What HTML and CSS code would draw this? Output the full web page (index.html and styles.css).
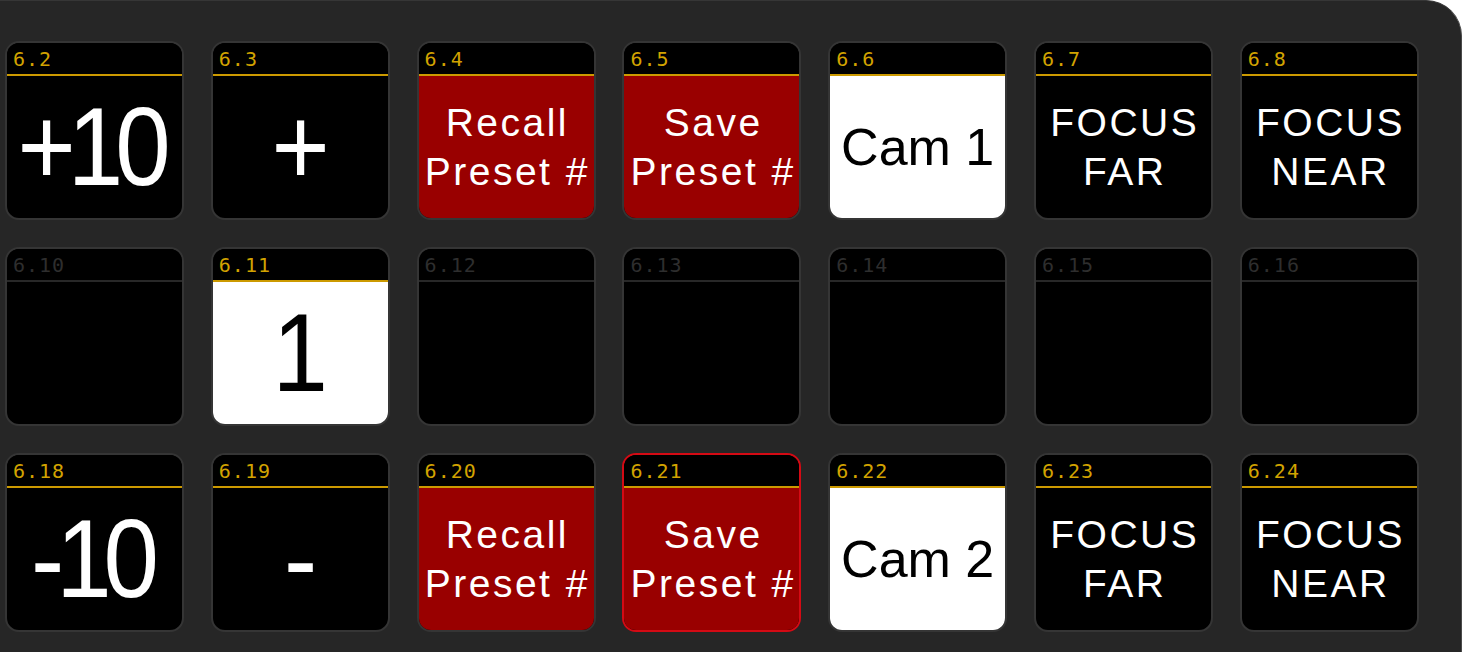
FILE: index.html
```html
<!DOCTYPE html>
<html lang="en">
<head>
    <meta charset="UTF-8">
    <meta name="viewport" content="width=device-width, initial-scale=1.0">
    <title>Macro Page 6</title>
    <link rel="stylesheet" href="styles.css">
</head>
<body>
    <div class="panel">
        <div class="grid">
            <!-- row 1 -->
            <div class="key">
                <div class="key-head">6.2</div>
                <div class="key-body"><span class="t-big">+10</span></div>
            </div>
            <div class="key">
                <div class="key-head">6.3</div>
                <div class="key-body"><span class="t-big">+</span></div>
            </div>
            <div class="key red">
                <div class="key-head">6.4</div>
                <div class="key-body"><span class="t-two">Recall<br>Preset #</span></div>
            </div>
            <div class="key red">
                <div class="key-head">6.5</div>
                <div class="key-body"><span class="t-two">Save<br>Preset #</span></div>
            </div>
            <div class="key white">
                <div class="key-head">6.6</div>
                <div class="key-body"><span class="t-cam">Cam 1</span></div>
            </div>
            <div class="key">
                <div class="key-head">6.7</div>
                <div class="key-body"><span class="t-two">FOCUS<br>FAR</span></div>
            </div>
            <div class="key">
                <div class="key-head">6.8</div>
                <div class="key-body"><span class="t-two">FOCUS<br>NEAR</span></div>
            </div>

            <!-- row 2 -->
            <div class="key empty">
                <div class="key-head">6.10</div>
                <div class="key-body"></div>
            </div>
            <div class="key white">
                <div class="key-head">6.11</div>
                <div class="key-body"><span class="t-big">1</span></div>
            </div>
            <div class="key empty">
                <div class="key-head">6.12</div>
                <div class="key-body"></div>
            </div>
            <div class="key empty">
                <div class="key-head">6.13</div>
                <div class="key-body"></div>
            </div>
            <div class="key empty">
                <div class="key-head">6.14</div>
                <div class="key-body"></div>
            </div>
            <div class="key empty">
                <div class="key-head">6.15</div>
                <div class="key-body"></div>
            </div>
            <div class="key empty">
                <div class="key-head">6.16</div>
                <div class="key-body"></div>
            </div>

            <!-- row 3 -->
            <div class="key">
                <div class="key-head">6.18</div>
                <div class="key-body"><span class="t-big">-10</span></div>
            </div>
            <div class="key">
                <div class="key-head">6.19</div>
                <div class="key-body"><span class="t-big">-</span></div>
            </div>
            <div class="key red">
                <div class="key-head">6.20</div>
                <div class="key-body"><span class="t-two">Recall<br>Preset #</span></div>
            </div>
            <div class="key red selected">
                <div class="key-head">6.21</div>
                <div class="key-body"><span class="t-two">Save<br>Preset #</span></div>
            </div>
            <div class="key white">
                <div class="key-head">6.22</div>
                <div class="key-body"><span class="t-cam">Cam 2</span></div>
            </div>
            <div class="key">
                <div class="key-head">6.23</div>
                <div class="key-body"><span class="t-two">FOCUS<br>FAR</span></div>
            </div>
            <div class="key">
                <div class="key-head">6.24</div>
                <div class="key-body"><span class="t-two">FOCUS<br>NEAR</span></div>
            </div>
        </div>
    </div>
</body>
</html>
```

FILE: styles.css
```css
body {
    margin: 0;
    background-color: #ffffff;
    font-family: "Liberation Sans", Arial, sans-serif;
    overflow: hidden;
}
.panel {
    box-sizing: border-box;
    width: 1462px;
    height: 652px;
    background-color: #262626;
    border-top: 1px solid #363636;
    border-right: 1px solid #4a4a4a;
    border-top-right-radius: 36px;
    padding: 40px 0 0 5px;
}
.grid {
    display: grid;
    grid-template-columns: repeat(7, 179px);
    grid-auto-rows: 179px;
    column-gap: 26.8px;
    row-gap: 27px;
}
.key {
    box-sizing: border-box;
    display: flex;
    flex-direction: column;
    background-color: #000;
    border: 2px solid #353535;
    border-radius: 14px;
    overflow: hidden;
}
.key-head {
    height: 33px;
    flex: none;
    display: flex;
    align-items: center;
    padding: 1px 0 0 6px;
    box-sizing: border-box;
    background-color: #000;
    border-bottom: 2px solid #cc9a00;
    color: #d2a300;
    font-family: "DejaVu Sans Mono", monospace;
    font-size: 20px;
    letter-spacing: 1px;
}
.key-body {
    flex: 1;
    display: flex;
    align-items: center;
    justify-content: center;
    text-align: center;
    white-space: nowrap;
    color: #fff;
}
.red .key-body {
    background-color: #990000;
}
.white .key-body {
    background-color: #fff;
    color: #000;
}
.empty .key-head {
    color: #2e2e2e;
    border-bottom-color: #282828;
}
.selected {
    border-color: #d40a14;
}
.t-big {
    display: inline-block;
    font-size: 112px;
    line-height: 1;
    letter-spacing: -0.08em;
    padding-right: 0.08em;
    transform: scaleX(0.89);
}
.t-two {
    font-size: 39px;
    line-height: 49px;
    letter-spacing: 2.5px;
    padding-left: 2.5px;
}
.t-cam {
    font-size: 52px;
    line-height: 1;
}
```
